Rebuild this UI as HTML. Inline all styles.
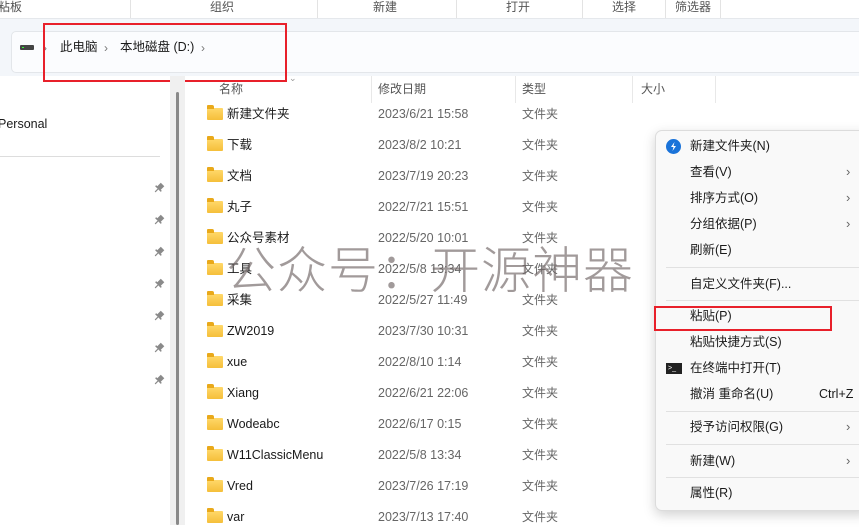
<!DOCTYPE html>
<html><head><meta charset="utf-8"><style>
*{margin:0;padding:0;box-sizing:border-box}
body{width:859px;height:525px;overflow:hidden;background:#fff;font-family:"Liberation Sans","Noto Sans CJK SC",sans-serif;font-size:12px;color:#1a1a1a;position:relative}
.a{position:absolute;white-space:nowrap;line-height:16px}
.tb{left:0;top:0;width:859px;height:19px;background:#fff;border-bottom:1px solid #e5e8ec}
.tb span{position:absolute;top:0;color:#555;font-size:12px;line-height:15px}
.vs{position:absolute;top:0;width:1px;height:18px;background:#e3e3e3}
.addr{left:0;top:19px;width:859px;height:57px;background:#f3f6fa}
.box{left:11px;top:31px;width:860px;height:42px;background:#fbfcfe;border:1px solid #e3e6ea;border-radius:5px}
.red{border:2px solid #e8202a}
.hd{top:81px;color:#555;font-size:12px}
.cs{position:absolute;top:76px;width:1px;height:27px;background:#e8e8e8}
.row{position:absolute;left:207px;height:20px;width:440px}
.row div{line-height:20px}
.fd{position:absolute;left:0;top:4px;width:16px;height:12px;background:linear-gradient(#ffd86a,#f5bf3a);border-radius:1px}
.fd:before{content:"";position:absolute;left:0;top:-3px;width:7px;height:4px;background:#e9a91a;border-radius:1px 2px 0 0}
.nm{position:absolute;left:20px;top:0;font-size:12.5px;color:#1a1a1a}
.dt{position:absolute;left:171px;top:0;color:#666;font-size:12.5px}
.ty{position:absolute;left:315px;top:0;color:#666;font-size:12px}
.menu{left:655px;top:130px;width:215px;height:381px;background:#f9f9f9;border:1px solid #dcdcdc;border-radius:7px;box-shadow:0 4px 12px rgba(0,0,0,.18)}
.mi{position:absolute;left:690px;font-size:12.5px;color:#1a1a1a;line-height:16px}
.ar{position:absolute;left:846px;color:#666;font-size:13px;line-height:16px}
.ms{position:absolute;left:666px;width:193px;height:1px;background:#e1e1e1}
.wm{left:226px;top:232px;font-family:"Noto Sans CJK SC",sans-serif;font-size:50px;line-height:70px;color:rgba(110,100,100,.65);letter-spacing:1px;font-weight:300}
</style></head><body>
<div class="a tb">
<span style="left:-2px">粘板</span><span style="left:210px">组织</span><span style="left:373px">新建</span><span style="left:506px">打开</span><span style="left:612px">选择</span><span style="left:675px">筛选器</span>
<div class="vs" style="left:130px"></div><div class="vs" style="left:317px"></div><div class="vs" style="left:456px"></div><div class="vs" style="left:582px"></div><div class="vs" style="left:665px"></div><div class="vs" style="left:720px"></div>
</div>
<div class="a addr"></div>
<div class="a box"></div>
<div class="a" style="left:20px;top:45px;width:14px;height:5px;background:#444;border-radius:1px"></div>
<div class="a" style="left:22px;top:47px;width:2px;height:1px;background:#3f3"></div>
<div class="a" style="left:43px;top:40px;color:#777">›</div>
<div class="a" style="left:60px;top:39px;font-size:12.5px">此电脑</div>
<div class="a" style="left:104px;top:40px;color:#777">›</div>
<div class="a" style="left:120px;top:39px;font-size:12.5px">本地磁盘 (D:)</div>
<div class="a" style="left:201px;top:40px;color:#777">›</div>
<div class="a red" style="left:43px;top:23px;width:244px;height:59px"></div>
<!-- left nav -->
<div class="a" style="left:-2px;top:116px;font-size:12.5px">Personal</div>
<div class="a" style="left:0;top:156px;width:160px;height:1px;background:#ddd"></div>
<div class="a" style="left:170px;top:76px;width:15px;height:449px;background:#f0f0f0"></div>
<div class="a" style="left:176px;top:92px;width:3px;height:433px;background:#8a8a8a;border-radius:2px"></div>
<svg class="a" style="left:150px;top:180px" width="20" height="210" viewBox="0 0 20 210">
<g fill="#8a8a8a">
<g transform="translate(9,8) rotate(45)"><rect x="-2.5" y="-5" width="5" height="6"/><rect x="-4" y="0" width="8" height="1.5"/><rect x="-0.6" y="1.5" width="1.2" height="4"/></g>
<g transform="translate(9,40) rotate(45)"><rect x="-2.5" y="-5" width="5" height="6"/><rect x="-4" y="0" width="8" height="1.5"/><rect x="-0.6" y="1.5" width="1.2" height="4"/></g>
<g transform="translate(9,72) rotate(45)"><rect x="-2.5" y="-5" width="5" height="6"/><rect x="-4" y="0" width="8" height="1.5"/><rect x="-0.6" y="1.5" width="1.2" height="4"/></g>
<g transform="translate(9,104) rotate(45)"><rect x="-2.5" y="-5" width="5" height="6"/><rect x="-4" y="0" width="8" height="1.5"/><rect x="-0.6" y="1.5" width="1.2" height="4"/></g>
<g transform="translate(9,136) rotate(45)"><rect x="-2.5" y="-5" width="5" height="6"/><rect x="-4" y="0" width="8" height="1.5"/><rect x="-0.6" y="1.5" width="1.2" height="4"/></g>
<g transform="translate(9,168) rotate(45)"><rect x="-2.5" y="-5" width="5" height="6"/><rect x="-4" y="0" width="8" height="1.5"/><rect x="-0.6" y="1.5" width="1.2" height="4"/></g>
<g transform="translate(9,200) rotate(45)"><rect x="-2.5" y="-5" width="5" height="6"/><rect x="-4" y="0" width="8" height="1.5"/><rect x="-0.6" y="1.5" width="1.2" height="4"/></g>
</g></svg>
<!-- headers -->
<div class="a" style="left:289px;top:70px;color:#999;font-size:9px">⌄</div>
<div class="a hd" style="left:219px">名称</div><div class="a hd" style="left:378px">修改日期</div><div class="a hd" style="left:522px">类型</div><div class="a hd" style="left:641px">大小</div>
<div class="cs" style="left:371px"></div><div class="cs" style="left:515px"></div><div class="cs" style="left:632px"></div><div class="cs" style="left:715px"></div>
<div class="row" style="top:104px"><div class="fd"></div><div class="nm">新建文件夹</div><div class="dt">2023/6/21 15:58</div><div class="ty">文件夹</div></div>
<div class="row" style="top:135px"><div class="fd"></div><div class="nm">下载</div><div class="dt">2023/8/2 10:21</div><div class="ty">文件夹</div></div>
<div class="row" style="top:166px"><div class="fd"></div><div class="nm">文档</div><div class="dt">2023/7/19 20:23</div><div class="ty">文件夹</div></div>
<div class="row" style="top:197px"><div class="fd"></div><div class="nm">丸子</div><div class="dt">2022/7/21 15:51</div><div class="ty">文件夹</div></div>
<div class="row" style="top:228px"><div class="fd"></div><div class="nm">公众号素材</div><div class="dt">2022/5/20 10:01</div><div class="ty">文件夹</div></div>
<div class="row" style="top:259px"><div class="fd"></div><div class="nm">工具</div><div class="dt">2022/5/8 13:34</div><div class="ty">文件夹</div></div>
<div class="row" style="top:290px"><div class="fd"></div><div class="nm">采集</div><div class="dt">2022/5/27 11:49</div><div class="ty">文件夹</div></div>
<div class="row" style="top:321px"><div class="fd"></div><div class="nm">ZW2019</div><div class="dt">2023/7/30 10:31</div><div class="ty">文件夹</div></div>
<div class="row" style="top:352px"><div class="fd"></div><div class="nm">xue</div><div class="dt">2022/8/10 1:14</div><div class="ty">文件夹</div></div>
<div class="row" style="top:383px"><div class="fd"></div><div class="nm">Xiang</div><div class="dt">2022/6/21 22:06</div><div class="ty">文件夹</div></div>
<div class="row" style="top:414px"><div class="fd"></div><div class="nm">Wodeabc</div><div class="dt">2022/6/17 0:15</div><div class="ty">文件夹</div></div>
<div class="row" style="top:445px"><div class="fd"></div><div class="nm">W11ClassicMenu</div><div class="dt">2022/5/8 13:34</div><div class="ty">文件夹</div></div>
<div class="row" style="top:476px"><div class="fd"></div><div class="nm">Vred</div><div class="dt">2023/7/26 17:19</div><div class="ty">文件夹</div></div>
<div class="row" style="top:507px"><div class="fd"></div><div class="nm">var</div><div class="dt">2023/7/13 17:40</div><div class="ty">文件夹</div></div>
<div class="a wm">公众号：开源神器</div>
<!-- menu -->
<div class="a menu"></div>
<svg class="a" style="left:666px;top:139px" width="15" height="15" viewBox="0 0 15 15"><circle cx="7.5" cy="7.5" r="7.5" fill="#1a73d9"/><path d="M8.5 3 L5 8 H7.5 L6.5 12 L10 7 H7.5 Z" fill="#fff"/></svg>
<div class="mi" style="top:138px">新建文件夹(N)</div>
<div class="mi" style="top:164px">查看(V)</div><div class="ar" style="top:164px">›</div>
<div class="mi" style="top:190px">排序方式(O)</div><div class="ar" style="top:190px">›</div>
<div class="mi" style="top:216px">分组依据(P)</div><div class="ar" style="top:216px">›</div>
<div class="mi" style="top:242px">刷新(E)</div>
<div class="ms" style="top:267px"></div>
<div class="mi" style="top:276px">自定义文件夹(F)...</div>
<div class="ms" style="top:300px"></div>
<div class="mi" style="top:308px">粘贴(P)</div>
<div class="a red" style="left:654px;top:306px;width:178px;height:25px"></div>
<div class="mi" style="top:334px">粘贴快捷方式(S)</div>
<div class="a" style="left:666px;top:363px;width:16px;height:11px;background:#222;color:#fff;font-size:7px;line-height:11px;padding-left:2px">&gt;_</div>
<div class="mi" style="top:360px">在终端中打开(T)</div>
<div class="mi" style="top:386px">撤消 重命名(U)</div><div class="a" style="left:819px;top:386px;font-size:12.5px">Ctrl+Z</div>
<div class="ms" style="top:411px"></div>
<div class="mi" style="top:419px">授予访问权限(G)</div><div class="ar" style="top:419px">›</div>
<div class="ms" style="top:444px"></div>
<div class="mi" style="top:453px">新建(W)</div><div class="ar" style="top:453px">›</div>
<div class="ms" style="top:477px"></div>
<div class="mi" style="top:485px">属性(R)</div>
</body></html>
